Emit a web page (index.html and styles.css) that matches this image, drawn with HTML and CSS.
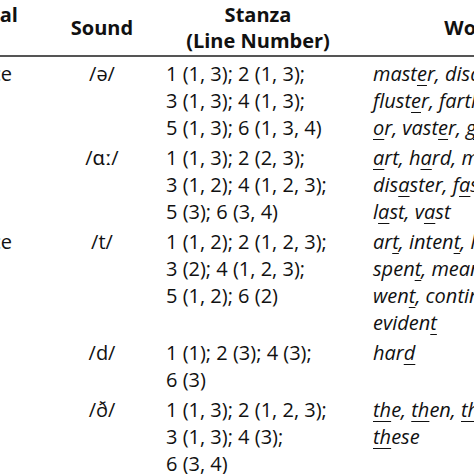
FILE: index.html
```html
<!DOCTYPE html>
<html lang="en">
<head>
<meta charset="utf-8">
<title>Sound devices</title>
<link rel="stylesheet" href="styles.css">
</head>
<body>
<table class="tbl">
  <colgroup>
    <col class="c1"><col class="c2"><col class="c3"><col class="c4">
  </colgroup>
  <thead>
    <tr>
      <th class="h-dev">Phonological<br>Device</th>
      <th>Sound</th>
      <th>Stanza<br>(Line Number)</th>
      <th>Words</th>
    </tr>
  </thead>
  <tbody>
    <tr>
      <td class="dev" rowspan="2">Assonance</td>
      <td class="snd">/ə/</td>
      <td class="st">1 (1, 3); 2 (1, 3);<br>3 (1, 3); 4 (1, 3);<br>5 (1, 3); 6 (1, 3, 4)</td>
      <td class="w">mast<u>e</u>r, disast<u>e</u>r,<br>flust<u>e</u>r, farth<u>e</u>r, fast<u>e</u>r,<br><u>o</u>r, vast<u>e</u>r, <u>g</u>esture</td>
    </tr>
    <tr>
      <td class="snd">/ɑː/</td>
      <td class="st">1 (1, 3); 2 (2, 3);<br>3 (1, 2); 4 (1, 2, 3);<br>5 (3); 6 (3, 4)</td>
      <td class="w"><u>a</u>rt, h<u>a</u>rd, m<u>a</u>ster,<br>dis<u>a</u>ster, f<u>a</u>ster,<br>l<u>a</u>st, v<u>a</u>st</td>
    </tr>
    <tr>
      <td class="dev" rowspan="3">Consonance</td>
      <td class="snd">/t/</td>
      <td class="st">1 (1, 2); 2 (1, 2, 3);<br>3 (2); 4 (1, 2, 3);<br>5 (1, 2); 6 (2)</td>
      <td class="w">ar<u>t</u>, inten<u>t</u>, los<u>t</u>,<br>spen<u>t</u>, mean<u>t</u>,<br>wen<u>t</u>, continen<u>t</u>,<br>eviden<u>t</u></td>
    </tr>
    <tr>
      <td class="snd">/d/</td>
      <td class="st">1 (1); 2 (3); 4 (3);<br>6 (3)</td>
      <td class="w">har<u>d</u></td>
    </tr>
    <tr>
      <td class="snd">/ð/</td>
      <td class="st">1 (1, 3); 2 (1, 2, 3);<br>3 (1, 3); 4 (3);<br>6 (3, 4)</td>
      <td class="w"><u>th</u>e, <u>th</u>en, <u>th</u>eir,<br><u>th</u>ese</td>
    </tr>
  </tbody>
</table>
</body>
</html>
```
FILE: styles.css
```css
html, body {
  margin: 0;
  padding: 0;
  overflow: hidden;
  background: #fff;
}
body {
  font-family: "Open Sans", "Noto Sans", sans-serif;
  color: #111;
}
.tbl {
  border-collapse: collapse;
  table-layout: fixed;
  width: 706px;
  margin-left: -110px;
  font-size: 20px;
}
.c1 { width: 154px; }
.c2 { width: 116px; }
.c3 { width: 196px; }
.c4 { width: 240px; }
th {
  font-weight: 700;
  line-height: 26px;
  padding: 2px 0 1px;
  text-align: center;
  vertical-align: middle;
  white-space: nowrap;
  border-bottom: 2px solid #555;
}
th.h-dev {
  text-align: left;
  padding-left: 0;
}
td {
  line-height: 27px;
  padding: 3px 0 0;
  vertical-align: top;
  white-space: nowrap;
}
td.dev {
  text-align: right;
  padding-right: 32px;
}
td.snd {
  text-align: center;
}
td.st {
  padding-left: 6px;
}
td.w {
  padding-left: 17px;
  font-style: italic;
}
td.w u {
  text-decoration-thickness: 1px;
  text-underline-offset: 4px;
}
```
